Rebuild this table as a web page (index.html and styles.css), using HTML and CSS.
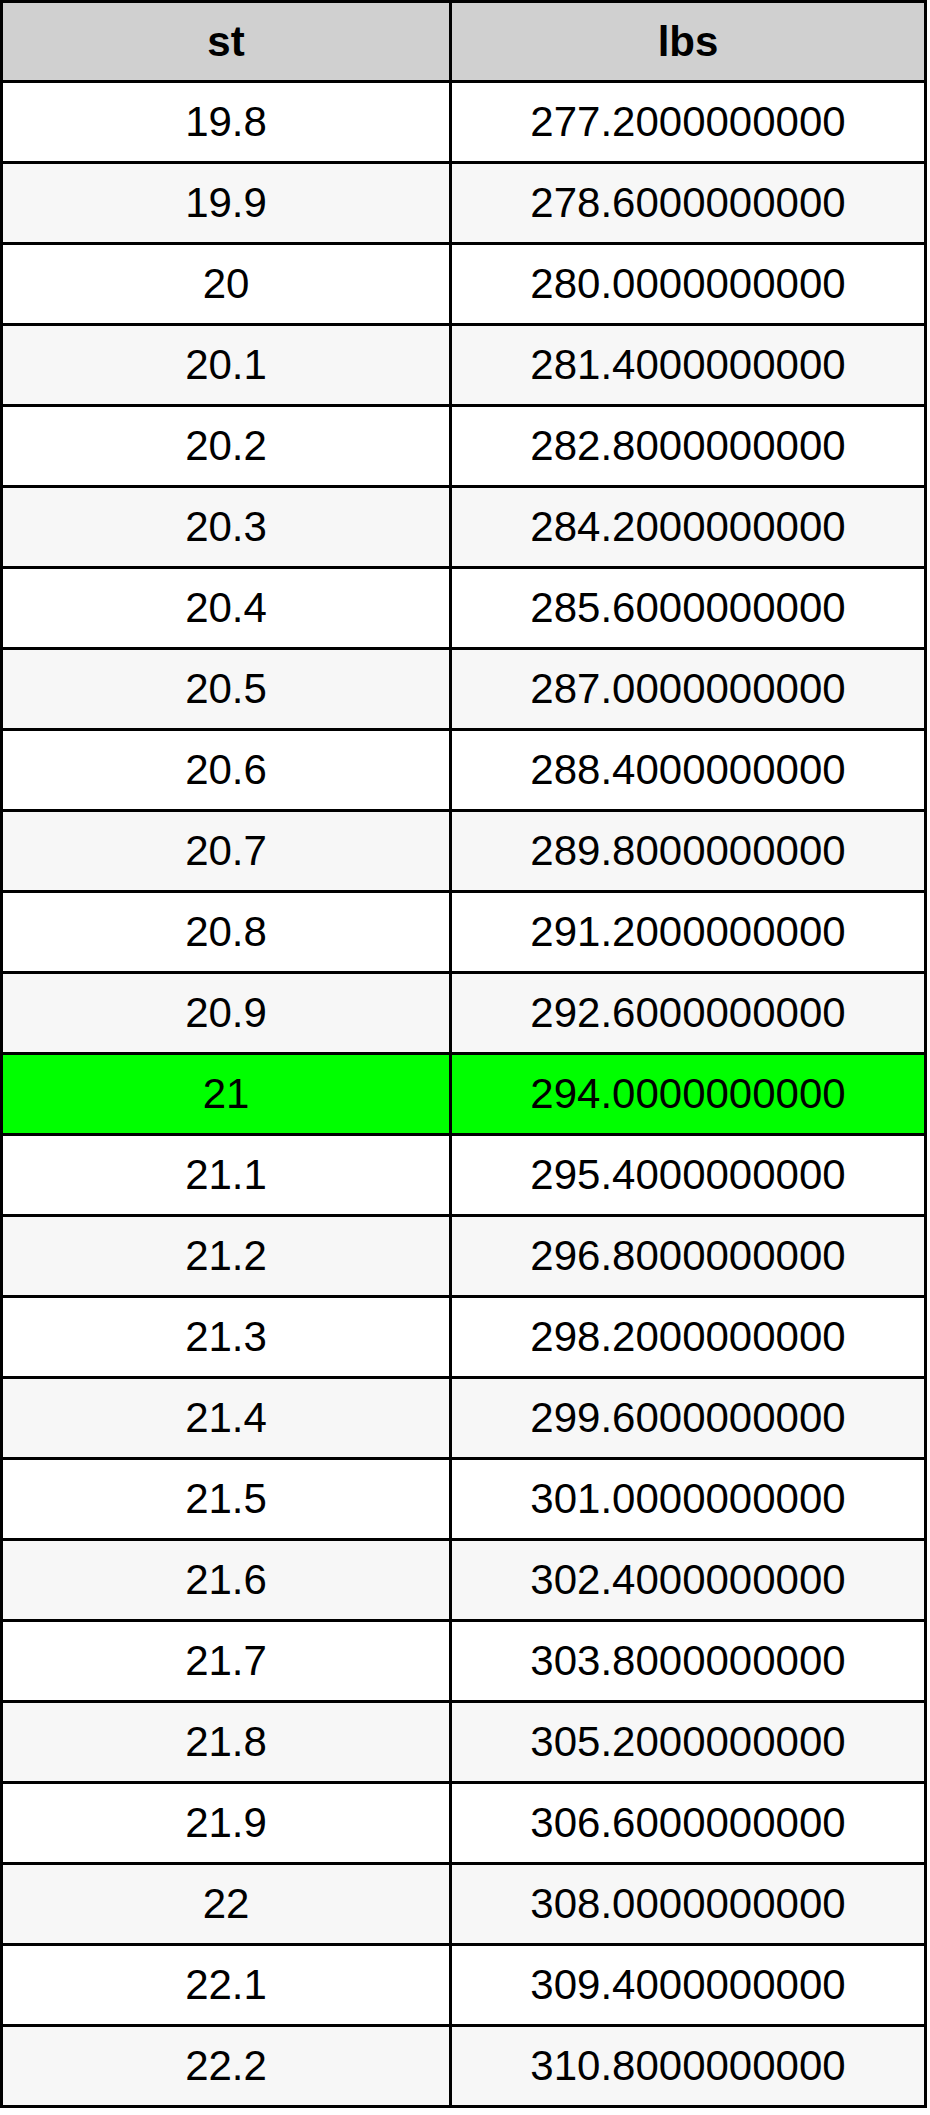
FILE: index.html
```html
<!DOCTYPE html>
<html>
<head>
<meta charset="utf-8">
<link rel="stylesheet" href="styles.css">
</head>
<body>
<table class="conv">
<colgroup><col class="c1"><col class="c2"></colgroup>
<thead>
<tr><th>st</th><th>lbs</th></tr>
</thead>
<tbody>
<tr class="odd"><td>19.8</td><td>277.2000000000</td></tr>
<tr class="even"><td>19.9</td><td>278.6000000000</td></tr>
<tr class="odd"><td>20</td><td>280.0000000000</td></tr>
<tr class="even"><td>20.1</td><td>281.4000000000</td></tr>
<tr class="odd"><td>20.2</td><td>282.8000000000</td></tr>
<tr class="even"><td>20.3</td><td>284.2000000000</td></tr>
<tr class="odd"><td>20.4</td><td>285.6000000000</td></tr>
<tr class="even"><td>20.5</td><td>287.0000000000</td></tr>
<tr class="odd"><td>20.6</td><td>288.4000000000</td></tr>
<tr class="even"><td>20.7</td><td>289.8000000000</td></tr>
<tr class="odd"><td>20.8</td><td>291.2000000000</td></tr>
<tr class="even"><td>20.9</td><td>292.6000000000</td></tr>
<tr class="hl"><td>21</td><td>294.0000000000</td></tr>
<tr class="odd"><td>21.1</td><td>295.4000000000</td></tr>
<tr class="even"><td>21.2</td><td>296.8000000000</td></tr>
<tr class="odd"><td>21.3</td><td>298.2000000000</td></tr>
<tr class="even"><td>21.4</td><td>299.6000000000</td></tr>
<tr class="odd"><td>21.5</td><td>301.0000000000</td></tr>
<tr class="even"><td>21.6</td><td>302.4000000000</td></tr>
<tr class="odd"><td>21.7</td><td>303.8000000000</td></tr>
<tr class="even"><td>21.8</td><td>305.2000000000</td></tr>
<tr class="odd"><td>21.9</td><td>306.6000000000</td></tr>
<tr class="even"><td>22</td><td>308.0000000000</td></tr>
<tr class="odd"><td>22.1</td><td>309.4000000000</td></tr>
<tr class="even"><td>22.2</td><td>310.8000000000</td></tr>
</tbody>
</table>
</body>
</html>
```
FILE: styles.css
```css
html, body {
  margin: 0;
  padding: 0;
  background: #ffffff;
}

.conv {
  border-collapse: separate;
  border-spacing: 0;
  table-layout: fixed;
  width: 927px;
  border-top: 3px solid #000;
  border-left: 3px solid #000;
  font-family: "Liberation Sans", Arial, sans-serif;
  font-size: 42px;
  color: #000;
}

.c1 { width: 449px; }
.c2 { width: 475px; }

.conv th,
.conv td {
  box-sizing: border-box;
  padding: 0;
  border-right: 3px solid #000;
  border-bottom: 3px solid #000;
  text-align: center;
  vertical-align: middle;
  line-height: 1;
}

.conv th {
  height: 80px;
  background: #d0d0d0;
  font-weight: bold;
}

.conv td {
  height: 81px;
}

.odd td { background: #ffffff; }
.even td { background: #f7f7f7; }
.hl td { background: #00ff00; }
```
